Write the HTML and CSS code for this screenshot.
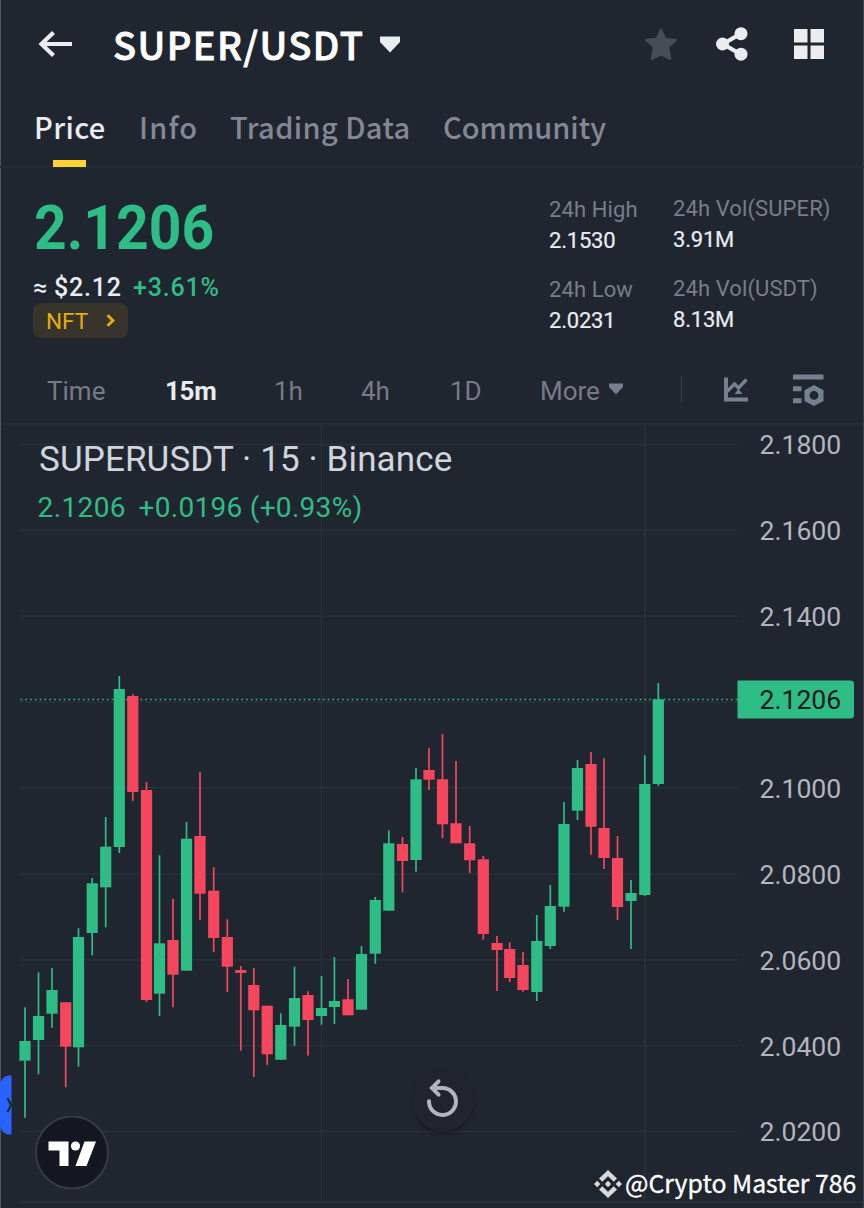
FILE: index.html
```html
<!DOCTYPE html>
<html lang="en">
<head>
  <meta charset="utf-8">
  <title>SUPER/USDT</title>
  <link rel="stylesheet" href="styles.css">
</head>
<body>
  <div class="app">
    <header class="header">
      <svg class="header__back" width="36" height="28" viewBox="0 0 36 28">
        <path d="M35 14H5M16.500 2.500L4.500 14l12 11.500" fill="none" stroke="#eaecef" stroke-width="4.200"/>
      </svg>
      <h1 class="header__pair">SUPER/USDT</h1>
      <svg class="header__caret" width="20" height="17" viewBox="0 0 20 17">
        <path d="M0 0.500h20v5.500L10 16.500 0 6z" fill="#eaecef"/>
      </svg>
      <svg class="header__star" width="34" height="35" viewBox="0 0 34 35">
        <path d="M17 2.500l4.400 9.200 10.600 1.200-7.900 7.100 2.200 12L17 27.500 7.700 32l2.200-12L2 12.900l10.600-1.200z" fill="#474d57" stroke="#474d57" stroke-width="2" stroke-linejoin="round"/>
      </svg>
      <svg class="header__share" width="32" height="34" viewBox="0 0 32 34">
        <path d="M25 6.500L7 17l18 10.500" fill="none" stroke="#eaecef" stroke-width="4.200"/>
        <circle cx="6.500" cy="17" r="6.500" fill="#eaecef"/>
        <circle cx="25" cy="6.700" r="6.500" fill="#eaecef"/>
        <circle cx="25" cy="27.200" r="6.500" fill="#eaecef"/>
      </svg>
      <svg class="header__grid" width="30" height="30" viewBox="0 0 30 30">
        <path d="M0 0h13.500v13.500H0zM16.500 0H30v13.500H16.500zM0 16.500h13.500V30H0zM16.500 16.500H30V30H16.500z" fill="#eaecef"/>
      </svg>
    </header>

    <nav class="tabs">
      <a class="tabs__item tabs__item--active">Price</a>
      <a class="tabs__item tabs__item--info">Info</a>
      <a class="tabs__item">Trading Data</a>
      <a class="tabs__item tabs__item--community">Community</a>
    </nav>

    <section class="summary">
      <div class="summary__main">
        <strong class="summary__price">2.1206</strong>
        <div class="summary__change">
          <span class="summary__approx">≈</span>
          <span class="summary__usd">$2.12</span>
          <span class="summary__percent">+3.61%</span>
        </div>
        <a class="summary__tag">NFT
          <svg width="10" height="13" viewBox="0 0 10 13">
            <path d="M1.500 1.200L7 6.500l-5.500 5.300" fill="none" stroke="#e6ad0c" stroke-width="2.800"/>
          </svg>
        </a>
      </div>
      <dl class="stats">
        <div class="stats__item">
          <dt>24h High</dt>
          <dd>2.1530</dd>
        </div>
        <div class="stats__item">
          <dt>24h Low</dt>
          <dd>2.0231</dd>
        </div>
      </dl>
      <dl class="stats stats--volume">
        <div class="stats__item">
          <dt>24h Vol(SUPER)</dt>
          <dd>3.91M</dd>
        </div>
        <div class="stats__item">
          <dt>24h Vol(USDT)</dt>
          <dd>8.13M</dd>
        </div>
      </dl>
    </section>

    <nav class="intervals">
      <a>Time</a>
      <a class="intervals__active">15m</a>
      <a>1h</a>
      <a>4h</a>
      <a>1D</a>
      <a class="intervals__more">More
        <svg width="14" height="12" viewBox="0 0 14 12">
          <path d="M0 0.500h14v3.500L7 11.500 0 4z" fill="#76808f"/>
        </svg>
      </a>
      <span class="intervals__divider"></span>
      <svg class="intervals__chart" width="24" height="25" viewBox="0 0 24 25">
        <path d="M2 0.500V22.500H24" fill="none" stroke="#76808f" stroke-width="4"/>
        <path d="M3 14.500l7.500-7.500 4 4 8-8.500" fill="none" stroke="#76808f" stroke-width="3.400"/>
        <path d="M14.500 12l4 5h-8z" fill="#76808f"/>
      </svg>
      <svg class="intervals__settings" width="31" height="32" viewBox="0 0 31 32">
        <path d="M0 0.500h30.500v5H0zM0 12.300h8.500v5H0zM0 24.300h8.500v5H0z" fill="#76808f"/>
        <path d="M21 11l9.500 5.300v10.800L21 32l-9.500-4.900V16.300zM21 17a4.400 4.400 0 1 0 0 8.800 4.400 4.400 0 0 0 0-8.800z" fill="#76808f" fill-rule="evenodd"/>
      </svg>
    </nav>

    <main class="chart">
      <svg class="chart__canvas" width="864" height="785" viewBox="0 423 864 785">
        <g id="grid"></g>
        <path class="chart__current-line" d="M20.500 699.500H738"/>
        <g id="candles"></g>
        <g id="scale"></g>
        <path d="M737.500 680.500h113a3.500 3.500 0 0 1 3.500 3.500v31a3.500 3.500 0 0 1-3.500 3.500h-113z" fill="#2ebd85"/>
        <text class="chart__price chart__price--current" x="759.500" y="709.300">2.1206</text>

        <text class="chart__title" x="39" y="471">SUPERUSDT · 15 · Binance</text>
        <text class="chart__ohlc" x="37.500" y="516.500">2.1206</text>
        <text class="chart__ohlc chart__ohlc--change" x="138.500" y="516.500">+0.0196 (+0.93%)</text>

        <path d="M0 1086a10 10 0 0 1 11.500-10.500v59A10 10 0 0 1 0 1124z" fill="#2962ff"/>
        <path d="M7.500 1098l3.500 7-3.500 7" fill="none" stroke="#1e2530" stroke-width="2"/>

        <g>
          <circle cx="72" cy="1152.500" r="36" fill="#131722" stroke="#363a45" stroke-width="2"/>
          <path d="M48.500 1141.500h20v24.500h-9v-15.500h-11zM84.500 1141.500h11.500l-9.500 24.500H75.500z" fill="#fff"/>
          <circle cx="75.500" cy="1146" r="4.600" fill="#fff"/>
        </g>

        <g class="chart__reset">
          <circle cx="443" cy="1100" r="31" fill="#1f242f"/>
          <path d="M429 1101.300a13.500 13.500 0 1 0 13.500-13.300h-9" fill="none" stroke="#b2b5be" stroke-width="4" stroke-linecap="round"/>
          <path d="M438.500 1081.300l-6.500 6.700 6.500 6.700" fill="none" stroke="#b2b5be" stroke-width="4" stroke-linecap="round"/>
        </g>

        <g class="chart__author">
          <path d="M599 1178.500l9-8.500 9 8.500-3.300 3.200-5.700-5.500-5.700 5.500zM599 1189.500l9 8.500 9-8.500-3.300-3.200-5.700 5.500-5.700-5.500zM594 1184l3.200-3.200 3.200 3.200-3.200 3.200zM604.800 1184l3.200-3.200 3.200 3.200-3.200 3.200zM615.600 1184l3.200-3.200 3.200 3.200-3.200 3.200z" fill="#d9d9d9"/>
          <text x="625" y="1193">@Crypto Master 786</text>
        </g>
      </svg>
    </main>
  </div>

  <script src="script.js"></script>
</body>
</html>
```
FILE: styles.css
```css
body {
  margin: 0;
  background-color: #202630;
  color: #eaecef;
  font-family: Roboto, "Liberation Sans", sans-serif;
}

.app {
  box-sizing: border-box;
  width: 864px;
  height: 1208px;
  overflow: hidden;
  box-shadow: inset 1px 0 #50545d, inset -1px 0 #3c414b;
}

.header {
  display: flex;
  align-items: center;
  height: 88px;
  padding-left: 37px;
}

.header__pair {
  width: 250px;
  margin: 0 17px 0 40px;
  padding-bottom: 1px;
  color: #fff;
  font-family: "Noto Sans CJK SC", sans-serif;
  font-size: 38px;
  font-weight: 500;
  line-height: 50px;
  letter-spacing: 1.4px;
  white-space: nowrap;
  -webkit-text-stroke: 0.8px #fff;
}

.header__star {
  margin-left: 244px;
}

.header__share {
  margin-left: 38px;
}

.header__grid {
  margin-left: 46px;
}

.tabs {
  display: grid;
  grid-template-columns: 105px 91px 213px 200px;
  box-sizing: border-box;
  height: 80px;
  padding-left: 34px;
  border-bottom: 2px solid #262c36;
  color: #848894;
  font-family: "Noto Sans CJK SC", sans-serif;
  font-size: 29px;
  font-weight: 500;
  line-height: 76px;
  letter-spacing: 0.4px;
}

.tabs__item {
  height: 78px;
  white-space: nowrap;
}

.tabs__item--info {
  letter-spacing: 1.2px;
}

.tabs__item--community {
  letter-spacing: 0;
}

.tabs__item--active {
  color: #eaecef;
}

.tabs__item--active::after {
  display: block;
  width: 33px;
  height: 7px;
  margin: -4px 0 0 19px;
  background-color: #fcd535;
  content: "";
}

.summary {
  display: grid;
  grid-template-columns: 516px 124px 180px;
  height: 190px;
  padding-left: 33px;
}

.summary__main {
  display: flex;
  flex-direction: column;
  align-items: flex-start;
}

.summary__price {
  margin: 25px 0 0 1px;
  color: #2ebd85;
  font-size: 61px;
  font-weight: 700;
  line-height: 70px;
  transform: scaleX(0.935);
  transform-origin: left;
}

.summary__change {
  display: flex;
  height: 30px;
  margin-top: 10px;
  font-size: 25px;
  font-weight: 500;
  line-height: 30px;
  letter-spacing: 0.8px;
}

.summary__approx {
  width: 21px;
}

.summary__usd {
  width: 79px;
}

.summary__percent {
  color: #2ebd85;
}

.summary__tag {
  display: flex;
  align-items: center;
  justify-content: space-between;
  box-sizing: border-box;
  width: 95px;
  height: 35px;
  padding: 0 12px 0 13px;
  border-radius: 8px;
  background-color: #37342b;
  color: #e6ad0c;
  font-size: 22.5px;
}

.stats {
  margin: 29px 0 0;
  font-size: 22px;
  line-height: 26px;
  letter-spacing: 0.1px;
  white-space: nowrap;
}

.stats--volume {
  margin-top: 28px;
}

.stats__item {
  height: 80px;
}

.stats dt {
  color: #777d89;
}

.stats dd {
  margin: 5px 0 0;
  letter-spacing: -0.2px;
  -webkit-text-stroke: 0.2px #eaecef;
}

.intervals {
  display: grid;
  grid-template-columns: 118px 110px 87px 89px 90px 141px 42px 70px 31px;
  align-items: center;
  box-sizing: border-box;
  height: 65px;
  padding: 0 0 0 47px;
  color: #777b87;
  font-size: 26px;
}

.intervals__active {
  color: #eaecef;
  font-weight: 700;
  letter-spacing: -0.3px;
}

.intervals a:nth-child(n+3) {
  margin-left: -1px;
}

.intervals__more {
  display: flex;
  gap: 9px;
  align-items: center;
}

.intervals__more svg {
  margin-bottom: 4px;
}

.intervals__divider {
  width: 1px;
  height: 27px;
  margin: 0 0 2px -1px;
  background-color: #3a404a;
}

.intervals__chart {
  margin-bottom: 3px;
}

.intervals__settings {
  margin: 0 0 2px -1px;
}

.chart__canvas {
  display: block;
}

.chart__line {
  fill: none;
  stroke: #2a303a;
  stroke-width: 1.5;
}

.chart__line--edge {
  stroke: #282e38;
  stroke-width: 2;
}

.chart__current-line {
  fill: none;
  stroke: #2ebd85;
  stroke-width: 1.3;
  stroke-dasharray: 1.6 3.2;
}

.chart__price {
  fill: #b2b5be;
  font-size: 26.6px;
}

.chart__price--current {
  fill: #131722;
}

.chart__title {
  fill: #d1d4dc;
  font-size: 35px;
  letter-spacing: 0.12px;
}

.chart__ohlc {
  fill: #2ebd85;
  font-size: 28px;
  letter-spacing: 0.4px;
}

.chart__ohlc--change {
  letter-spacing: 0.3px;
}

.chart__reset circle {
  filter: drop-shadow(0 3px 2px rgba(0, 0, 0, 0.3));
}

.chart__author text {
  fill: #fff;
  font-family: "Noto Sans CJK SC", sans-serif;
  font-size: 24.8px;
  stroke: #fff;
  stroke-width: 0.3px;
}
```
FILE: script.js
```js
// x, high, body top, body bottom, low, rising
const candles = [
  [25, 1007.3, 1041, 1060.7, 1117.7, 1],
  [38.5, 972.3, 1016, 1040, 1074.3, 1],
  [52, 968, 990, 1013.7, 1027.7, 1],
  [65.7, 1002.3, 1002.3, 1046.7, 1087.3, 0],
  [78.5, 928.3, 937, 1047.3, 1066.7, 1],
  [92.2, 878, 883.3, 933, 955.3, 1],
  [105.7, 817, 846.7, 887.3, 927.3, 1],
  [119.3, 676, 689, 847, 853, 1],
  [132.8, 694.3, 696, 792, 801, 0],
  [146.5, 782, 790, 1000, 1002, 0],
  [159.5, 855.3, 943.3, 993.7, 1016, 1],
  [173, 898.7, 940, 974.7, 1007.3, 0],
  [186.5, 822, 838.7, 970.7, 970.7, 1],
  [200, 772, 836, 893.7, 920, 0],
  [213.7, 867.3, 890.7, 938, 952, 0],
  [227.3, 919.3, 937, 966.7, 992, 0],
  [240.8, 966, 970, 973, 1050.7, 0],
  [253.8, 968, 985, 1010.3, 1077, 0],
  [267.2, 1005.7, 1005.7, 1054.3, 1065, 0],
  [280.8, 1013.3, 1025, 1059.7, 1059.7, 1],
  [294.5, 966.7, 998, 1026.7, 1045.7, 1],
  [308, 991.3, 995, 1020, 1055.7, 0],
  [321.5, 976, 1008, 1016, 1024.7, 1],
  [334.4, 957, 1001, 1007, 1024, 1],
  [348, 979, 999.3, 1015.3, 1015.3, 0],
  [361.5, 946, 954, 1009.7, 1009.7, 1],
  [375.3, 897, 900, 953.7, 963.7, 1],
  [388.8, 830.3, 843.3, 910.7, 910.7, 1],
  [402.5, 837, 844, 861, 892.3, 0],
  [416, 768, 779.3, 860, 871.7, 1],
  [429, 748, 770, 779.7, 790, 0],
  [442.5, 734, 779.3, 824.3, 838, 0],
  [456, 761, 823.3, 843.3, 843.3, 0],
  [469.7, 826, 843.3, 860.3, 873, 0],
  [483.3, 856, 859.3, 934, 939.7, 0],
  [497, 936, 943, 950, 991, 0],
  [509.7, 942.3, 949, 978, 982, 0],
  [523, 952, 965, 990, 991.7, 0],
  [536.8, 915, 941, 992, 1001, 1],
  [550.3, 885, 906, 946, 949, 1],
  [564, 802, 824, 906.7, 911.7, 1],
  [577.5, 760, 768, 810.7, 820, 1],
  [591, 752, 764, 826.7, 854.7, 0],
  [604, 758.3, 828, 858, 869, 0],
  [617.5, 836, 858, 907, 920, 0],
  [631, 880, 893, 901, 949, 1],
  [644.8, 755, 784, 895, 896, 1],
  [658.3, 683, 699.3, 784, 786, 1]
];

const prices = [
  ['2.1800', 444.5],
  ['2.1600', 530],
  ['2.1400', 616.3],
  ['', 702],
  ['2.1000', 787.7],
  ['2.0800', 874],
  ['2.0600', 959.7],
  ['2.0400', 1045.7],
  ['2.0200', 1131.5]
];

const scale = document.querySelector('#scale');
const grid = document.querySelector('#grid');

grid.innerHTML = `
  <path class="chart__line" d="M321.5 424V1202M644.7 424V1202"/>
  <path class="chart__line chart__line--edge" d="M1 423.700H863M20 1202H863"/>
`;

prices.forEach(([label, y]) => {
  grid.innerHTML += `<path class="chart__line" d="M20 ${y}H738"/>`;
  if (label) {
    scale.innerHTML += `<text class="chart__price" x="759.5" y="${y + 9.9}">${label}</text>`;
  }
});

document.querySelector('#candles').innerHTML = candles.map(([x, high, top, bottom, low, rising]) => {
  const color = rising ? '#2ebd85' : '#f6465d';
  return `
    <path d="M${x} ${high}V${low}" stroke="${color}" stroke-width="1.7"/>
    <rect x="${x - 5.6}" y="${top}" width="11.2" height="${bottom - top}" fill="${color}"/>
  `;
}).join('');
```
